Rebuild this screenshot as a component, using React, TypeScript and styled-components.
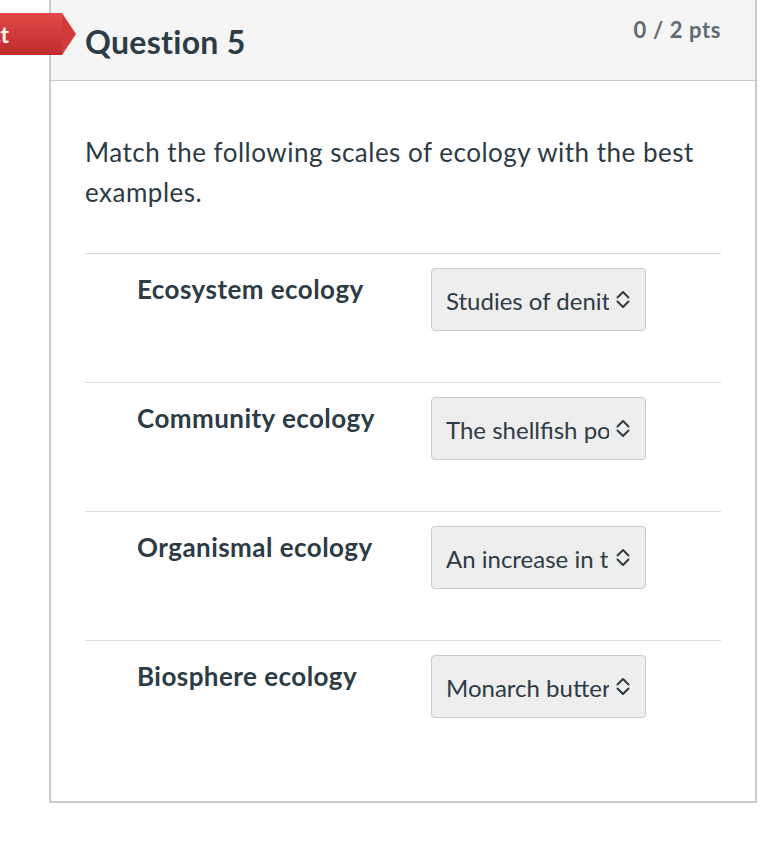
import React from 'react';
import styled, { createGlobalStyle } from 'styled-components';

const GlobalStyle = createGlobalStyle`
    body {
        margin: 0;
        background: #fff;
        font-family: Lato, "Open Sans", "Liberation Sans", sans-serif;
        color: #2d3b45;
    }
`;

const Page = styled.div`
    position: relative;
    padding-left: 49px;
    width: 708px;
`;

const Card = styled.section`
    border: 2px solid #c7cbcf;
    border-top: none;
    background: #fff;
`;

const Header = styled.header`
    display: flex;
    justify-content: space-between;
    align-items: flex-start;
    height: 80px;
    padding: 0 34px;
    background: #f5f5f5;
    border-bottom: 1px solid #c7cbcf;
`;

const Title = styled.h2`
    margin: 24px 0 0;
    font-size: 32px;
    line-height: 36px;
    letter-spacing: 0.3px;
    font-weight: 700;
    color: #2d3b45;
`;

const Points = styled.div`
    margin-top: 17px;
    font-size: 22px;
    line-height: 26px;
    letter-spacing: 0.6px;
    font-weight: 700;
    color: #5f6a72;
`;

const FlagClip = styled.div`
    position: absolute;
    left: 0;
    top: 0;
    width: 80px;
    height: 70px;
    overflow: hidden;
`;

const Flag = styled.div`
    position: absolute;
    left: 0;
    top: 13px;
    width: 62px;
    height: 42px;
    display: flex;
    align-items: center;
    justify-content: flex-end;
    padding-right: 53px;
    box-sizing: border-box;
    background: linear-gradient(#e24848, #bd2c2c);
    color: #fff;
    font-size: 22px;
    font-weight: 700;
    white-space: nowrap;

    &::after {
        content: '';
        position: absolute;
        left: 62px;
        top: 0;
        border-top: 21px solid transparent;
        border-bottom: 21px solid transparent;
        border-left: 14px solid #d03a3a;
    }
`;

const Body = styled.div`
    padding: 51px 34px 32px;
`;

const Prompt = styled.p`
    margin: 0 0 41px;
    font-size: 26px;
    line-height: 40px;
    letter-spacing: 0.5px;
`;

const Row = styled.div`
    display: flex;
    align-items: flex-start;
    border-top: 1px solid #dadddf;
    padding: 14px 0 51px;
`;

const Label = styled.div`
    flex: 0 0 294px;
    margin-left: 52px;
    padding-top: 5px;
    font-size: 26px;
    line-height: 32px;
    letter-spacing: 0.45px;
    font-weight: 700;
`;

const SelectBox = styled.div`
    display: flex;
    align-items: center;
    width: 215px;
    height: 63px;
    box-sizing: border-box;
    padding: 3px 15px 0 14px;
    background: #eeeeee;
    border: 1px solid #c7cbcf;
    border-radius: 4px;
`;

const Value = styled.span`
    flex: 1;
    overflow: hidden;
    white-space: nowrap;
    font-size: 24px;
    line-height: 30px;
    color: #2d3b45;
`;

const Chevron = () => (
    <svg width="14" height="19" viewBox="0 0 14 19" style={{ marginLeft: 7, marginTop: -3, flex: 'none' }}>
        <polyline points="1.5,7.5 7,2 12.5,7.5" fill="none" stroke="#2d3b45" strokeWidth="2" strokeLinecap="round" strokeLinejoin="round" />
        <polyline points="1.5,11.5 7,17 12.5,11.5" fill="none" stroke="#2d3b45" strokeWidth="2" strokeLinecap="round" strokeLinejoin="round" />
    </svg>
);

const matches = [
    { label: 'Ecosystem ecology', value: 'Studies of denitrification' },
    { label: 'Community ecology', value: 'The shellfish population' },
    { label: 'Organismal ecology', value: 'An increase in the' },
    { label: 'Biosphere ecology', value: 'Monarch butterflies' },
];

const App: React.FC = () => (
    <>
        <GlobalStyle />
        <Page>
            <Card>
                <Header>
                    <Title>Question 5</Title>
                    <Points>0 / 2 pts</Points>
                </Header>
                <Body>
                    <Prompt>Match the following scales of ecology with the best examples.</Prompt>
                    {matches.map((m) => (
                        <Row key={m.label}>
                            <Label>{m.label}</Label>
                            <SelectBox>
                                <Value>{m.value}</Value>
                                <Chevron />
                            </SelectBox>
                        </Row>
                    ))}
                </Body>
            </Card>
            <FlagClip>
                <Flag>Incorrect</Flag>
            </FlagClip>
        </Page>
    </>
);

export default App;
